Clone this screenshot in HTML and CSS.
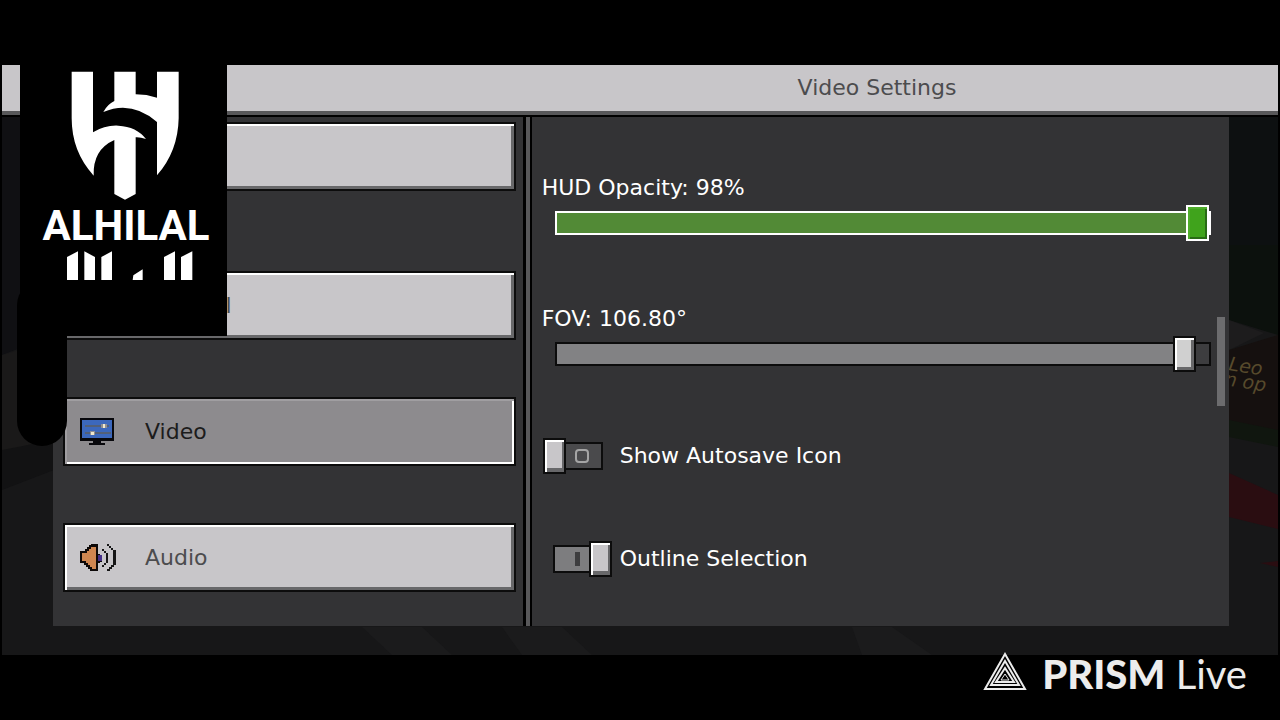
FILE: index.html
```
<!DOCTYPE html>
<html lang="en">
<head>
<meta charset="UTF-8">
<meta name="viewport" content="width=device-width, initial-scale=1.0">
<title>Video Settings</title>
<link rel="stylesheet" href="styles.css">
</head>
<body>

<main class="screen">

<!-- dimmed world behind the menu -->
<svg class="backdrop" viewBox="0 0 1276 590" preserveAspectRatio="none" aria-hidden="true">
<rect width="1276" height="590" fill="#171718"/>
<path d="M0 50H52V270L0 290Z" fill="#101013"/>
<path d="M0 290L52 275V370L0 390Z" fill="#1a1919"/>
<path d="M0 385L52 375V405L0 425Z" fill="#121213"/>
<path d="M360 562H420L450 590H390ZM500 562H560L590 590H520ZM850 562H890L930 590H860Z" fill="#1b1b1c"/>
<path d="M1227 50H1276V180H1227Z" fill="#0d1011"/>
<path d="M1227 180H1276V270L1227 255Z" fill="#0c110d"/>
<path d="M1227 255L1262 268L1227 285Z" fill="#1d1c1d"/>
<path d="M1227 285L1276 270V370L1227 355Z" fill="#15100f"/>
<path d="M1227 355L1276 365V382L1227 372Z" fill="#10160f"/>
<path d="M1227 408L1276 430V464L1227 452Z" fill="#2a0d11"/>
<path d="M1258 498L1276 496V502Z" fill="#2a0d11"/>
<g class="sign">
<text x="1226" y="305" transform="rotate(9 1226 305)">Leo</text>
<text x="1222" y="320" transform="rotate(9 1222 320)">n op</text>
</g>
</svg>

<header class="titlebar">
<h1>Video Settings</h1>
</header>

<div class="panel">

<nav class="menu">
<button class="menu-item first" type="button" aria-label="Accessibility"></button>
<button class="menu-item" type="button"><span class="icon"></span>General</button>
<button class="menu-item active" type="button">
<svg class="icon" viewBox="0 0 40 34" shape-rendering="crispEdges" aria-hidden="true">
<path d="M1 3H35V26H22V28H26V30H10V28H14V26H1Z" fill="#08080c"/>
<path d="M3 5H33V23H3Z" fill="#3c68bd"/>
<path d="M6 10H30V12H6ZM6 17H32V19H6Z" fill="#536078"/>
<path d="M22 9H28V13H22ZM11 16H16V20H11Z" fill="#8f9094"/>
<path d="M24 9H26V13H24ZM12 17H15V20H12Z" fill="#f0e8ce"/>
</svg>
Video
</button>
<button class="menu-item" type="button">
<svg class="icon" viewBox="0 0 40 34" shape-rendering="crispEdges" aria-hidden="true">
<path d="M1 10H6V8H8V6H10V4H12V3H19V13H21V14H23V21H21V22H19V30H11V28H9V26H7V24H5V22H1Z" fill="#0e0908"/>
<path d="M3 12H8V10H10V8H12V6H17V28H13V26H11V24H9V22H7V20H3Z" fill="#cf8650"/>
<path d="M19 14H23V20H19Z" fill="#45308a"/>
<path d="M23 8H25V10H27V12H29V22H27V24H25V26H23V24H25V22H27V12H25V10H23ZM28 3H30V5H32V7H34V9H37V24H35V26H33V28H31V30H28V28H30V26H32V24H34V9H32V7H30V5H28Z" fill="#161616"/>
</svg>
Audio
</button>
</nav>

<section class="content">
<div class="settings">

<div class="setting">
<label for="hud">HUD Opacity: 98%</label>
<input class="slider green" id="hud" type="range" min="0" max="100" value="100">
</div>

<div class="setting">
<label for="fov">FOV: 106.80°</label>
<input class="slider" id="fov" type="range" min="0" max="100" value="98">
</div>

<div class="setting-row">
<input class="toggle" id="autosave" type="checkbox">
<label for="autosave">Show Autosave Icon</label>
</div>

<div class="setting-row">
<input class="toggle" id="outline" type="checkbox" checked>
<label for="outline">Outline Selection</label>
</div>

</div>
<div class="scrollbar"><div class="scroll-thumb"></div></div>
</section>

</div>

<!-- stream overlay -->
<div class="pill"></div>
<div class="club">
<svg viewBox="60 30 621 813" role="img" aria-label="Alhilal">
<g fill="#fff">
<path d="M215 50H279V232Q315 210 355 212Q410 215 438 252Q420 246 407 247V417L375 434L343 417V255Q278 284 281 362Q215 290 215 190Z"/>
<path d="M343 50H407V118Q440 118 471 128V50H536V190Q534 290 471 361V201Q395 135 310 171Q322 148 343 138Z"/>
<text class="club-name" x="378" y="556" text-anchor="middle">ALHILAL</text>
<path d="M201 675V606L234 589V675ZM253 589L285 606V675H253ZM304 675V606L336 589V675ZM398 675L400 661L428 643V675ZM492 675V606L525 589V675ZM543 675V606L577 589V675Z"/>
</g>
</svg>
</div>

</main>

<footer class="watermark">
<svg viewBox="0 0 44 38" aria-hidden="true">
<g fill="none" stroke="#ececec">
<path d="M22 2L42 37H2Z" stroke-width="2"/>
<path d="M22 9L36 33H8Z" stroke-width="2"/>
<path d="M22 16L31 30H13Z" stroke-width="2"/>
<path d="M22 22L26 28H18Z" stroke-width="1"/>
</g>
</svg>
<p><b>PRISM</b> Live</p>
</footer>

</body>
</html>
```

FILE: styles.css
```
*,
*::before,
*::after{
box-sizing:border-box;
}

body{
margin:0;
padding-top:65px;
min-height:100vh;
display:flex;
flex-direction:column;
background:#000;
color:#fff;
font-family:"DejaVu Sans", sans-serif;
font-size:22px;
line-height:26px;
overflow-x:hidden;
}

.screen{
position:relative;
flex:1;
display:flex;
flex-direction:column;
margin:0 2px;
padding-bottom:29px;
}

.backdrop{
position:absolute;
inset:0;
width:100%;
height:100%;
}

.sign{
fill:#574a2c;
font-size:19px;
font-style:italic;
}

/* Title */
.titlebar{
position:relative;
height:52px;
padding:10px 0 0 474px;
background:#c8c6c9;
border-bottom:2px solid #000;
box-shadow:inset 0 -4px #58585a;
text-align:center;
}

.titlebar h1{
margin:0;
font-size:22px;
font-weight:normal;
color:#4c4c4e;
}

/* Panel */
.panel{
position:relative;
flex:1;
display:grid;
grid-template-columns:41fr 61fr;
margin:0 49px 0 51px;
background:#333335;
}

/* Left menu */
.menu{
display:flex;
flex-direction:column;
gap:57px;
padding:5px 7px 34px 10px;
border-right:3px solid #000;
}

.menu-item{
display:flex;
align-items:center;
gap:26px;
height:69px;
padding:0 14px;
border:2px solid #0c0c0c;
background:#c8c6c9;
box-shadow:inset 2px 2px #fff, inset -3px -3px #68686a;
color:#4c4c4e;
font:inherit;
text-align:left;
}

.menu-item.first{
margin-bottom:23px;
}

.menu-item.active{
background:#8d8b8e;
box-shadow:inset 2px 2px #a09ea1, inset -2px -2px #fff;
color:#1c1c1c;
}

.icon{
flex:none;
width:40px;
height:34px;
}

/* Right side */
.content{
display:flex;
border-left:4px solid #58585a;
box-shadow:inset 2px 0 #000;
}

.settings{
flex:1;
display:flex;
flex-direction:column;
gap:65px;
padding:58px 6px 48px 12px;
}

.setting{
display:flex;
flex-direction:column;
gap:4px;
}

.slider{
appearance:none;
height:36px;
margin:0 0 0 13px;
background:none;
}

.slider::-webkit-slider-runnable-track{
height:24px;
border:2px solid #0c0c0c;
background:linear-gradient(90deg, #828284 96%, #3d3d3f 96%);
}

.slider::-webkit-slider-thumb{
appearance:none;
width:23px;
height:36px;
margin-top:-8px;
border:2px solid #0c0c0c;
background:#d0d0d0;
box-shadow:inset 2px 2px #fff, inset -3px -3px #68686a;
}

.slider.green::-webkit-slider-runnable-track{
border-color:#fff;
background:#528a36;
}

.slider.green::-webkit-slider-thumb{
border-color:#fff;
background:#40a31c;
box-shadow:inset 2px 2px #4fad2b, inset -2px -2px #286b14;
}

.setting-row{
display:flex;
align-items:center;
gap:17px;
height:38px;
padding-left:11px;
}

/* Toggle */
.toggle{
appearance:none;
position:relative;
width:50px;
height:28px;
margin:0;
border:2px solid #0c0c0c;
background:#4a4a4c;
}

.toggle::before{
content:"";
position:absolute;
top:-6px;
left:-12px;
width:23px;
height:36px;
border:2px solid #0c0c0c;
background:#c8c6c9;
box-shadow:inset 2px 2px #fff, inset -2px -4px #68686a;
}

.toggle::after{
content:"";
position:absolute;
top:5px;
left:20px;
width:14px;
height:14px;
border:2px solid #a5a5a5;
border-radius:4px;
}

.toggle:checked{
background:#7d7d7f;
}

.toggle:checked::before{
left:34px;
}

.toggle:checked::after{
width:5px;
border:0;
border-radius:0;
background:#3d3d3f;
}

/* Scrollbar */
.scrollbar{
width:8px;
margin-right:4px;
padding-top:200px;
}

.scroll-thumb{
height:89px;
background:#6c6c6e;
}

/* Overlay */
.club{
position:absolute;
top:0;
left:18px;
width:207px;
height:271px;
background:#000;
}

.club svg{
display:block;
width:100%;
}

.club-name{
font-family:Roboto, sans-serif;
font-size:126px;
font-weight:bold;
}

.pill{
position:absolute;
top:215px;
left:15px;
width:50px;
height:166px;
border-radius:25px;
background:#000;
}

.watermark{
position:relative;
display:flex;
align-items:center;
justify-content:flex-end;
gap:15px;
height:68px;
margin-top:-3px;
padding:0 33px 30px 0;
color:#ececec;
font-family:Lato, sans-serif;
font-size:40px;
line-height:40px;
}

.watermark svg{
width:44px;
height:38px;
}

.watermark b{
font-weight:900;
}

.watermark p{
margin:6px 0 0;
}
```
